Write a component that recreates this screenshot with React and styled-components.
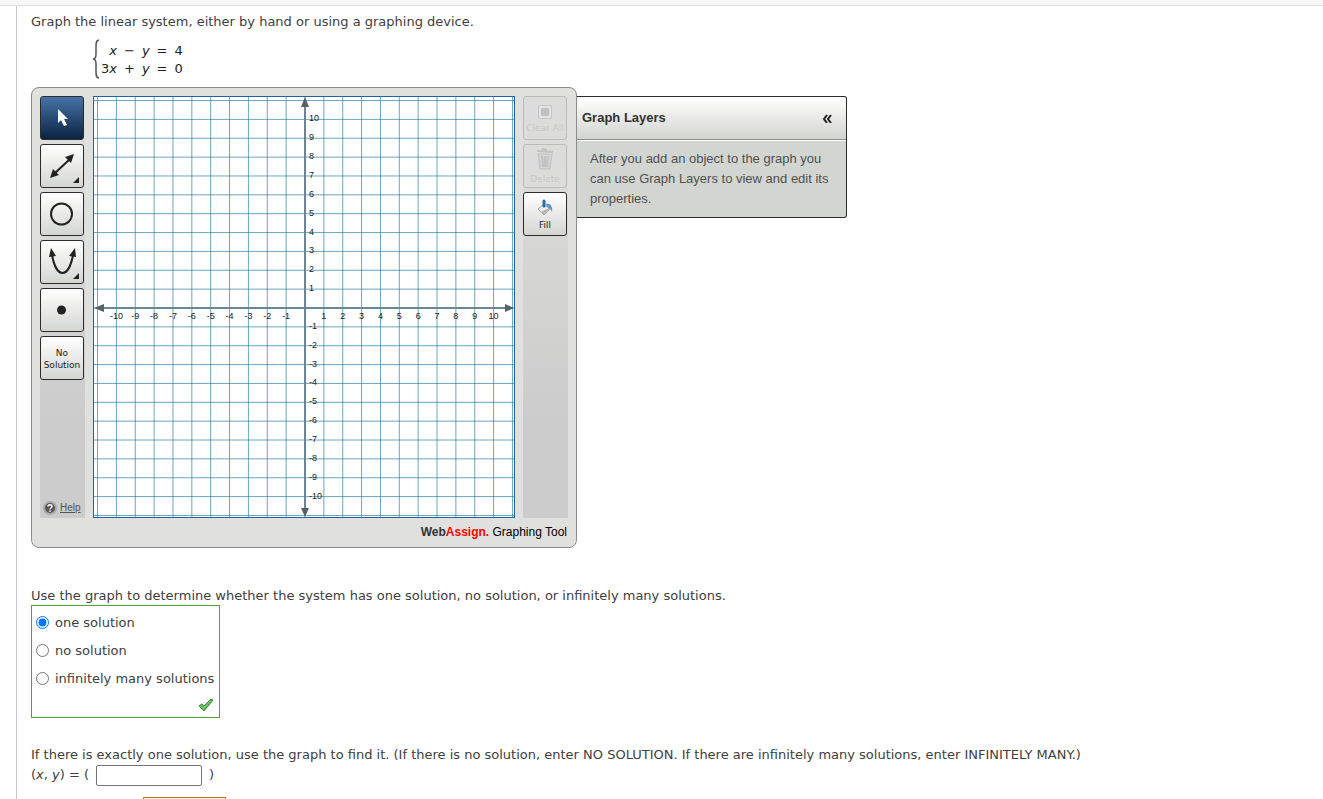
import React, { useState } from 'react'
import styled, { createGlobalStyle, css } from 'styled-components'

const GlobalStyle = createGlobalStyle`
    * {
        box-sizing: border-box;
    }
    body {
        margin: 0;
        height: 100vh;
        overflow: hidden;
        background: #fff;
        color: #404040;
        font: 13px/18px Verdana, 'DejaVu Sans', sans-serif;
    }
`

const TopBar = styled.div`
    height: 6px;
    background: #f7f7f7;
    border-bottom: 1px solid #ddd;
`

const Question = styled.main`
    margin-left: 16px;
    min-height: calc(100vh - 6px);
    padding: 7px 14px 0;
    border-left: 1px solid #c8c8c8;
`

const Text = styled.p`
    margin: 0;
`

const System = styled.div`
    display: flex;
    align-items: center;
    gap: 2px;
    margin: 8px 0 8px 61px;
`

const Equations = styled.div`
    display: grid;
    grid-template-columns: repeat(5, auto);
    column-gap: 7px;
    justify-items: end;
    padding-top: 2px;
    color: #222;
`

const Widget = styled.div`
    display: flex;
    align-items: flex-start;
`

const Tool = styled.section`
    padding: 8px 8px 6px;
    border: 1px solid #8c8c8c;
    border-radius: 8px;
    background: #e0e0de;
    font-family: Arial, 'Liberation Sans', sans-serif;
`

const ToolBody = styled.div`
    display: flex;
    gap: 8px;
`

const ToolColumn = styled.div`
    display: flex;
    flex-direction: column;
    gap: 4px;
    width: 45px;
    background: linear-gradient(#e0e0de, #ccc 320px);
`

const ToolButton = styled.button`
    display: flex;
    flex-direction: column;
    align-items: center;
    justify-content: center;
    position: relative;
    width: 44px;
    height: 44px;
    padding: 0;
    border: 1px solid #2b2b2b;
    border-radius: 3px;
    background: linear-gradient(#fff, #d4d6d1);
    color: #222;
    font: 9px/12px 'DejaVu Sans', sans-serif;
    white-space: nowrap;

    &:disabled {
        border-color: #bcbcbc;
        background: #dcdcda;
        color: #c8c8c8;
    }

    ${props => props.$active && css`
        background: linear-gradient(#4673a8, #0b2341);
    `}
`

const ButtonLabel = styled.span`
    padding-top: 2px;
`

const Corner = styled.span`
    position: absolute;
    right: 4px;
    bottom: 4px;
    border-style: solid;
    border-width: 0 0 6px 6px;
    border-color: transparent transparent #222 transparent;
`

const Help = styled.a`
    display: flex;
    align-items: center;
    gap: 3px;
    margin-top: auto;
    padding: 0 3px 2px;
    color: #555;
    font-size: 10px;
    line-height: 16px;
`

const Graph = styled.svg`
    display: block;
    width: 422px;
    height: 422px;
    border: 1px solid #1e63a5;
    background: #fff;
`

const ToolFooter = styled.div`
    padding: 5px 1px 0;
    color: #000;
    font-size: 12px;
    text-align: right;
`

const Brand = styled.b`
    color: #333;

    span {
        color: #f00;
    }
`

const Layers = styled.aside`
    width: 270px;
    margin-top: 9px;
    border: 1px solid #2b2b2b;
    border-left: 0;
    border-radius: 0 3px 3px 0;
    background: #d3d5d0;
    font-family: Arial, 'Liberation Sans', sans-serif;
`

const LayersHead = styled.div`
    display: flex;
    align-items: center;
    justify-content: space-between;
    height: 43px;
    padding: 0 10px 0 5px;
    border-bottom: 1px solid #8c8c8c;
    border-radius: 0 3px 0 0;
    background: linear-gradient(#fff, #d3d5d0);
`

const LayersTitle = styled.h2`
    margin: 0;
    color: #333;
    font-size: 13px;
`

const Collapse = styled.button`
    display: flex;
    padding: 4px;
    border: 0;
    background: none;
`

const LayersText = styled.p`
    margin: 0;
    padding: 8px 13px;
    border-top: 1px solid #fff;
    color: #505050;
    font-size: 13px;
    line-height: 20px;
`

const Prompt = styled.legend`
    padding: 0;
`

const Fieldset = styled.fieldset`
    margin: 39px 0 28px;
    padding: 0;
    border: 0;
`

const Choices = styled.div`
    display: inline-flex;
    flex-direction: column;
    gap: 10px;
    padding: 8px 5px 5px 4px;
    border: 1px solid #5aa02c;
    vertical-align: top;
`

const Choice = styled.label`
    display: flex;
    align-items: center;
    gap: 6px;

    input {
        width: 13px;
        height: 13px;
        margin: 0 0 2px;
    }
`

const Check = styled.svg`
    align-self: flex-end;
`

const Answer = styled.div`
    display: flex;
    align-items: center;
    gap: 7px;
    height: 22px;
`

const AnswerInput = styled.input`
    width: 106px;
    height: 21px;
    border: 1px solid #767676;
    border-radius: 2px;
`

const ReadIt = styled.button`
    display: block;
    width: 83px;
    height: 24px;
    margin: 11px 0 0 112px;
    border: 1px solid #b9772a;
    background: #fdf0dc;
`

const CursorIcon = () => (
    <svg width="42" height="42" viewBox="0 0 42 42">
        <path d="M17 12v14l3-3 3 6 3-1-3-6h4z" fill="#fff" />
    </svg>
)

const LineIcon = () => (
    <svg width="42" height="42" viewBox="0 0 42 42" fill="#222">
        <path d="M14 28L29 14" stroke="#222" strokeWidth="2" />
        <path d="M33 9l-3 9-6-6zM9 33l3-9 6 6z" />
    </svg>
)

const CircleIcon = () => (
    <svg width="42" height="42" viewBox="0 0 42 42">
        <circle cx="20.500" cy="21" r="10.500" fill="none" stroke="#222" strokeWidth="2" />
    </svg>
)

const ParabolaIcon = () => (
    <svg width="42" height="42" viewBox="0 0 42 42" fill="#222">
        <path d="M11 14C13 25 17 32 21.500 32S30 25 32 14" fill="none" stroke="#222" strokeWidth="2" />
        <path d="M10 7l-2 9 7-1zM34 7l-6 8 7 1z" />
    </svg>
)

const PointIcon = () => (
    <svg width="42" height="42" viewBox="0 0 42 42">
        <circle cx="20.500" cy="21" r="4.500" fill="#222" />
    </svg>
)

const ClearIcon = () => (
    <svg width="16" height="18" viewBox="0 0 16 18">
        <rect x="1.500" y="3.500" width="13" height="13" fill="#e4e4e4" stroke="#c6c6c6" />
        <rect x="4" y="6" width="8" height="8" fill="#c0c0c0" />
    </svg>
)

const TrashIcon = () => (
    <svg width="18" height="24" viewBox="0 0 18 24" fill="none" stroke="#c2c2c2">
        <path d="M1 4l16 1M6 2l5 1" strokeWidth="2" />
        <path d="M2 7h14l-2 15H4z" fill="#d4d4d4" />
        <path d="M6 9l1 11M9 9v11M12 9l-1 11" strokeWidth="2" />
    </svg>
)

const FillIcon = () => (
    <svg width="18" height="19" viewBox="0 0 18 19">
        <path d="M2 11l6-5 6 5-6 6z" fill="#ececec" stroke="#a5a5a5" />
        <path d="M5 14l8-4 1 1-6 6z" fill="#b5b5b5" />
        <path d="M10 6c4-1 7 2 6 8-1-2-2-4-5-5z" fill="#5d96c8" />
        <path d="M8 3v5" stroke="#2868b0" strokeWidth="3" strokeLinecap="round" />
    </svg>
)

const HelpIcon = () => (
    <svg width="14" height="14" viewBox="0 0 14 14">
        <circle cx="7" cy="7" r="6" fill="#666" stroke="#aaa" strokeWidth="2" />
        <circle cx="7" cy="7" r="4.500" fill="#555" />
        <path d="M5 5.500c0-2.500 4-2.500 4 0 0 1.500-2 1.500-2 3M7 9.500V11" fill="none" stroke="#fff" strokeWidth="1.500" />
    </svg>
)

const STEP = 18.86
const CENTER = 211
const ticks = Array.from({ length: 23 }, (_, i) => i - 11)
const labels = ticks.filter(n => n !== 0 && Math.abs(n) < 11)

const GraphArea = () => (
    <Graph viewBox="0 0 420 420" role="img" aria-label="Coordinate plane">
        <g stroke="#2f7fa3" strokeOpacity="0.7">
            {ticks.map(n => (
                <React.Fragment key={n}>
                    <path d={`M${CENTER + n * STEP} 0V420`} />
                    <path d={`M0 ${CENTER + n * STEP}H420`} />
                </React.Fragment>
            ))}
        </g>
        <path d={`M${CENTER} 6V414M6 ${CENTER}H414`} stroke="#6b8595" strokeWidth="2" />
        <g fill="#566268">
            <path d="M211 0l4 10h-8zM211 420l4-9h-8zM0 211l10-4v8zM420 211l-9-4v8z" />
        </g>
        <g fill="#222" fontFamily="Arial, 'Liberation Sans', sans-serif" fontSize="9">
            {labels.map(n => (
                <React.Fragment key={n}>
                    <text x={CENTER + n * STEP} y="222" textAnchor="middle">{n}</text>
                    <text x="215" y={CENTER - n * STEP + 2}>{n}</text>
                </React.Fragment>
            ))}
        </g>
    </Graph>
)

const options = ['one solution', 'no solution', 'infinitely many solutions']

const App = () => {
    const [choice, setChoice] = useState(options[0])

    return (
        <React.Fragment>
            <GlobalStyle />
            <TopBar />
            <Question>
                <Text>Graph the linear system, either by hand or using a graphing device.</Text>
                <System>
                    <svg width="7" height="40" viewBox="0 0 7 40" fill="none" stroke="#555">
                        <path d="M7 1C4 1 4 4 4 8v7c0 3-1 5-3 5 2 0 3 2 3 5v7c0 4 0 7 3 7" strokeWidth="1.500" />
                    </svg>
                    <Equations>
                        <i>x</i><span>−</span><i>y</i><span>=</span><span>4</span>
                        <span>3<i>x</i></span><span>+</span><i>y</i><span>=</span><span>0</span>
                    </Equations>
                </System>
                <Widget>
                    <Tool>
                        <ToolBody>
                            <ToolColumn>
                                <ToolButton $active aria-label="Select"><CursorIcon /></ToolButton>
                                <ToolButton aria-label="Line"><LineIcon /><Corner /></ToolButton>
                                <ToolButton aria-label="Circle"><CircleIcon /></ToolButton>
                                <ToolButton aria-label="Parabola"><ParabolaIcon /><Corner /></ToolButton>
                                <ToolButton aria-label="Point"><PointIcon /></ToolButton>
                                <ToolButton><ButtonLabel>No<br />Solution</ButtonLabel></ToolButton>
                                <Help href="#help"><HelpIcon />Help</Help>
                            </ToolColumn>
                            <GraphArea />
                            <ToolColumn>
                                <ToolButton disabled><ClearIcon /><ButtonLabel>Clear All</ButtonLabel></ToolButton>
                                <ToolButton disabled><TrashIcon /><ButtonLabel>Delete</ButtonLabel></ToolButton>
                                <ToolButton><FillIcon /><ButtonLabel>Fill</ButtonLabel></ToolButton>
                            </ToolColumn>
                        </ToolBody>
                        <ToolFooter>
                            <Brand>Web<span>Assign.</span></Brand> Graphing Tool
                        </ToolFooter>
                    </Tool>
                    <Layers>
                        <LayersHead>
                            <LayersTitle>Graph Layers</LayersTitle>
                            <Collapse aria-label="Collapse">
                                <svg width="10" height="10" viewBox="0 0 10 10" fill="none" stroke="#222" strokeWidth="2">
                                    <path d="M5 2L2 6l3 4M9 2L6 6l3 4" />
                                </svg>
                            </Collapse>
                        </LayersHead>
                        <LayersText>
                            After you add an object to the graph you can use Graph Layers to view and edit its properties.
                        </LayersText>
                    </Layers>
                </Widget>
                <Fieldset>
                    <Prompt>
                        Use the graph to determine whether the system has one solution, no solution, or infinitely many solutions.
                    </Prompt>
                    <Choices>
                        {options.map(option => (
                            <Choice key={option}>
                                <input
                                    type="radio"
                                    name="solutions"
                                    checked={choice === option}
                                    onChange={() => setChoice(option)}
                                />
                                {option}
                            </Choice>
                        ))}
                        <Check width="16" height="14" viewBox="0 0 16 14">
                            <path d="M1 8l3-2 2 2 7-7 2 1-9 11z" fill="#6cc067" stroke="#3a8a3a" />
                        </Check>
                    </Choices>
                </Fieldset>
                <Text>
                    If there is exactly one solution, use the graph to find it. (If there is no solution, enter NO SOLUTION. If there are infinitely many solutions, enter INFINITELY MANY.)
                </Text>
                <Answer>
                    <label htmlFor="answer">(<i>x</i>, <i>y</i>) = (</label>
                    <AnswerInput id="answer" />
                    )
                </Answer>
                <ReadIt aria-label="Read It" />
            </Question>
        </React.Fragment>
    )
}

export default App
